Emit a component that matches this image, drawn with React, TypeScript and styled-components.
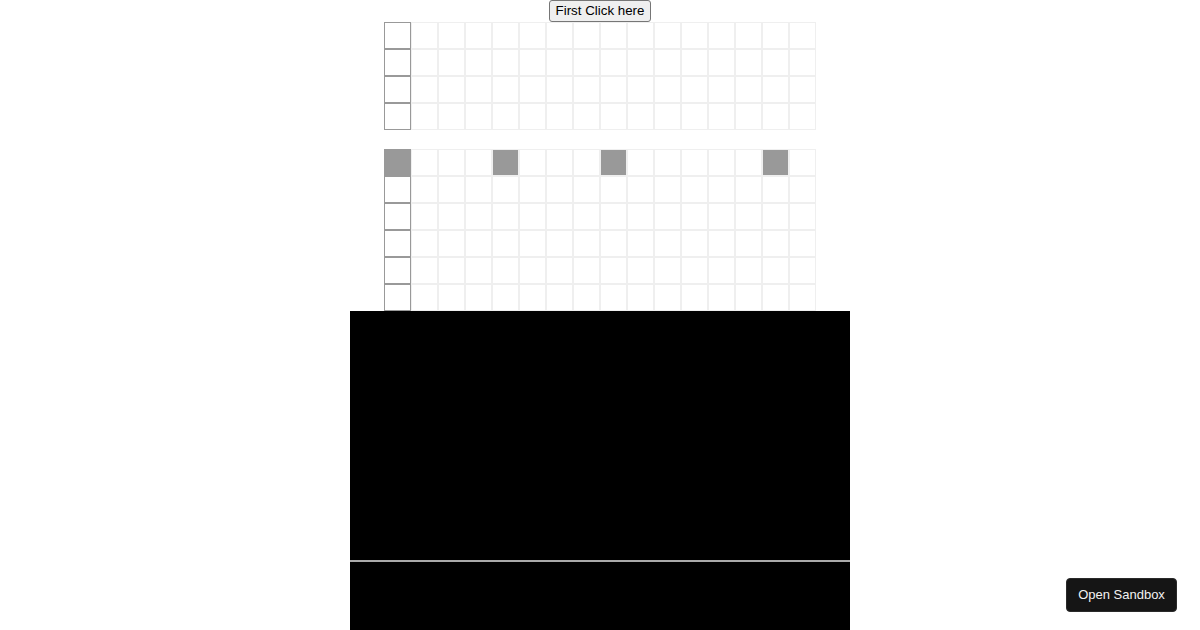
import React from "react";
import styled, { createGlobalStyle } from "styled-components";

const GlobalStyle = createGlobalStyle`
  html, body {
    margin: 0;
    padding: 0;
    background: #fff;
    font-family: "Liberation Sans", Arial, sans-serif;
    overflow: hidden;
  }
`;

const Page = styled.div`
  display: flex;
  flex-direction: column;
  align-items: center;
  width: 100%;
  height: 630px;
`;

const StartButton = styled.button`
  box-sizing: border-box;
  height: 22px;
  padding: 1px 6px;
  margin: 0;
  font-family: "Liberation Sans", Arial, sans-serif;
  font-size: 13.33px;
  line-height: 18px;
  color: #000;
  background: #efefef;
  border: 1px solid #767676;
  border-radius: 3px;
  cursor: pointer;
`;

const Grid = styled.div<{ $gap: number }>`
  display: flex;
  flex-direction: column;
  margin-top: ${(p) => p.$gap}px;
`;

const Row = styled.div`
  display: flex;
`;

const Cell = styled.div<{ $label?: boolean; $on?: boolean }>`
  width: 25px;
  height: 25px;
  border: 1px solid ${(p) => (p.$label ? "#999" : "#efefef")};
  background: ${(p) => (p.$on ? "#999" : "#fff")};
`;

const Screen = styled.div`
  width: 500px;
  height: 500px;
  background: #000;
  flex-shrink: 0;
`;

const SandboxButton = styled.button`
  position: fixed;
  right: 23px;
  bottom: 18px;
  width: 111px;
  height: 34px;
  padding: 0 0 2px;
  font-family: "Liberation Sans", Arial, sans-serif;
  font-size: 13px;
  color: #f2f2f2;
  background: #151515;
  border: 1px solid #2a2a2a;
  border-radius: 4px;
  cursor: pointer;
`;

const COLS = 16;
const active: Record<string, boolean> = {
  "0-0": true,
  "0-4": true,
  "0-8": true,
  "0-14": true,
};

const Sequencer: React.FC<{ rows: number; gap: number; marks?: Record<string, boolean> }> = ({
  rows,
  gap,
  marks = {},
}) => (
  <Grid $gap={gap}>
    {Array.from({ length: rows }).map((_, r) => (
      <Row key={r}>
        {Array.from({ length: COLS }).map((_, c) => (
          <Cell key={c} $label={c === 0} $on={!!marks[`${r}-${c}`]} />
        ))}
      </Row>
    ))}
  </Grid>
);

const App: React.FC = () => {
  return (
    <>
      <GlobalStyle />
      <Page>
        <StartButton>First Click here</StartButton>
        <Sequencer rows={4} gap={0} />
        <Sequencer rows={6} gap={19} marks={active} />
        <Screen>
          <svg width="500" height="500" viewBox="0 0 500 500">
            <line x1="0" y1="250" x2="500" y2="250" stroke="#aaa" strokeWidth="2" />
          </svg>
        </Screen>
      </Page>
      <SandboxButton>Open Sandbox</SandboxButton>
    </>
  );
};

export default App;
